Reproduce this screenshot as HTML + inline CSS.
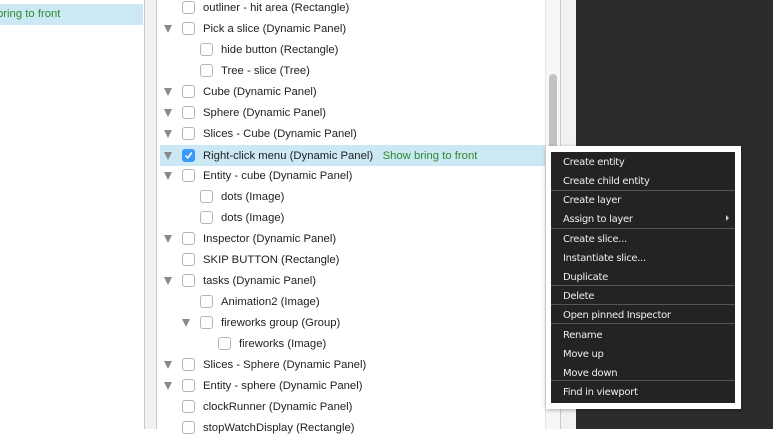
<!DOCTYPE html>
<html><head><style>
*{margin:0;padding:0;box-sizing:border-box}
body{width:773px;height:429px;overflow:hidden;background:#fff;position:relative;font-family:"Liberation Sans",Arial,sans-serif;font-size:11px;color:#222}
.a{position:absolute}
.row{position:absolute;left:157px;width:388px;height:21px}
.cb{position:absolute;top:4px;width:13px;height:13px;border:1px solid #b5b5b5;border-radius:3px;background:#fff}
.tri{position:absolute;top:7px;width:0;height:0;border-left:4.5px solid transparent;border-right:4.5px solid transparent;border-top:8px solid #8a8a8a}
.t{position:absolute;top:5px;white-space:nowrap;line-height:13px;font-size:11.3px}
.menu{position:absolute;left:546px;top:146px;width:195px;height:263px;background:#fff;box-shadow:0 1px 4px rgba(0,0,0,.3)}
.mi{position:absolute;left:563px;color:#eee;font-size:10px;line-height:12px;font-family:"DejaVu Sans","Liberation Sans",sans-serif;letter-spacing:-0.3px;margin-top:2px}
.sep{position:absolute;left:551px;width:184px;height:1px;background:#555}
</style></head><body>
<div class="a" style="left:0;top:4px;width:143px;height:21px;background:#cbe8f4"></div>
<div class="a" style="left:-3px;top:8px;color:#2b8a2b;line-height:13px;font-size:11.3px">bring to front</div>
<div class="a" style="left:144px;top:0;width:1px;height:429px;background:#c8c8c8"></div>
<div class="a" style="left:145px;top:0;width:11px;height:429px;background:#f2f2f2"></div>
<div class="a" style="left:156px;top:0;width:1px;height:429px;background:#c8c8c8"></div>
<div class="a" style="left:160px;top:145px;width:385px;height:21px;background:#cbe8f4"></div>
<div class="a" style="left:545px;top:0;width:16px;height:429px;background:#f7f7f7;border-left:1px solid #e6e6e6"></div>
<div class="a" style="left:549px;top:74px;width:8px;height:80px;background:#c2c2c2;border-radius:4px"></div>
<div class="a" style="left:560px;top:0;width:1px;height:429px;background:#c8c8c8"></div>
<div class="a" style="left:561px;top:0;width:15px;height:429px;background:#f2f2f2"></div>
<div class="a" style="left:576px;top:0;width:197px;height:429px;background:#2c2c2c"></div>

<div class="row" style="top:-3px"><div class="cb" style="left:25px"></div><div class="t" style="left:46px">outliner - hit area (Rectangle)</div></div>
<div class="row" style="top:18px"><div class="tri" style="left:7px"></div><div class="cb" style="left:25px"></div><div class="t" style="left:46px">Pick a slice (Dynamic Panel)</div></div>
<div class="row" style="top:39px"><div class="cb" style="left:43px"></div><div class="t" style="left:64px">hide button (Rectangle)</div></div>
<div class="row" style="top:60px"><div class="cb" style="left:43px"></div><div class="t" style="left:64px">Tree - slice (Tree)</div></div>
<div class="row" style="top:81px"><div class="tri" style="left:7px"></div><div class="cb" style="left:25px"></div><div class="t" style="left:46px">Cube (Dynamic Panel)</div></div>
<div class="row" style="top:102px"><div class="tri" style="left:7px"></div><div class="cb" style="left:25px"></div><div class="t" style="left:46px">Sphere (Dynamic Panel)</div></div>
<div class="row" style="top:123px"><div class="tri" style="left:7px"></div><div class="cb" style="left:25px"></div><div class="t" style="left:46px">Slices - Cube (Dynamic Panel)</div></div>
<div class="row" style="top:145px"><div class="tri" style="left:7px"></div><div class="cb" style="left:25px;background:#3b99fc;border-color:#3b99fc"><svg width="11" height="11" style="position:absolute;left:0;top:0"><path d="M2.5 5.5 L4.8 8 L8.8 2.5" stroke="#fff" stroke-width="1.5" fill="none"/></svg></div><div class="t" style="left:46px">Right-click menu (Dynamic Panel)&nbsp;&nbsp;&nbsp;<span style="color:#2b8a2b">Show bring to front</span></div></div>
<div class="row" style="top:165px"><div class="tri" style="left:7px"></div><div class="cb" style="left:25px"></div><div class="t" style="left:46px">Entity - cube (Dynamic Panel)</div></div>
<div class="row" style="top:186px"><div class="cb" style="left:43px"></div><div class="t" style="left:64px">dots (Image)</div></div>
<div class="row" style="top:207px"><div class="cb" style="left:43px"></div><div class="t" style="left:64px">dots (Image)</div></div>
<div class="row" style="top:228px"><div class="tri" style="left:7px"></div><div class="cb" style="left:25px"></div><div class="t" style="left:46px">Inspector (Dynamic Panel)</div></div>
<div class="row" style="top:249px"><div class="cb" style="left:25px"></div><div class="t" style="left:46px">SKIP BUTTON (Rectangle)</div></div>
<div class="row" style="top:270px"><div class="tri" style="left:7px"></div><div class="cb" style="left:25px"></div><div class="t" style="left:46px">tasks (Dynamic Panel)</div></div>
<div class="row" style="top:291px"><div class="cb" style="left:43px"></div><div class="t" style="left:64px">Animation2 (Image)</div></div>
<div class="row" style="top:312px"><div class="tri" style="left:25px"></div><div class="cb" style="left:43px"></div><div class="t" style="left:64px">fireworks group (Group)</div></div>
<div class="row" style="top:333px"><div class="cb" style="left:61px"></div><div class="t" style="left:82px">fireworks (Image)</div></div>
<div class="row" style="top:354px"><div class="tri" style="left:7px"></div><div class="cb" style="left:25px"></div><div class="t" style="left:46px">Slices - Sphere (Dynamic Panel)</div></div>
<div class="row" style="top:375px"><div class="tri" style="left:7px"></div><div class="cb" style="left:25px"></div><div class="t" style="left:46px">Entity - sphere (Dynamic Panel)</div></div>
<div class="row" style="top:396px"><div class="cb" style="left:25px"></div><div class="t" style="left:46px">clockRunner (Dynamic Panel)</div></div>
<div class="row" style="top:417px"><div class="cb" style="left:25px"></div><div class="t" style="left:46px">stopWatchDisplay (Rectangle)</div></div>

<div class="menu"></div>
<div class="a" style="left:551px;top:152px;width:184px;height:251px;background:#232323"></div>
<div class="sep" style="top:190px"></div>
<div class="sep" style="top:228px"></div>
<div class="sep" style="top:285px"></div>
<div class="sep" style="top:304px"></div>
<div class="sep" style="top:323px"></div>
<div class="sep" style="top:380px"></div>
<div class="mi" style="top:155px">Create entity</div>
<div class="mi" style="top:174px">Create child entity</div>
<div class="mi" style="top:193px">Create layer</div>
<div class="mi" style="top:212px">Assign to layer</div>
<div class="a" style="left:726px;top:215px;border-top:3px solid transparent;border-bottom:3px solid transparent;border-left:3px solid #ccc"></div>
<div class="mi" style="top:232px">Create slice...</div>
<div class="mi" style="top:251px">Instantiate slice...</div>
<div class="mi" style="top:270px">Duplicate</div>
<div class="mi" style="top:289px">Delete</div>
<div class="mi" style="top:308px">Open pinned Inspector</div>
<div class="mi" style="top:328px">Rename</div>
<div class="mi" style="top:347px">Move up</div>
<div class="mi" style="top:366px">Move down</div>
<div class="mi" style="top:385px">Find in viewport</div>
</body></html>
